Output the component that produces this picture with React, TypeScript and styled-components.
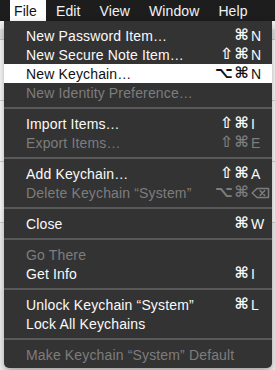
import React from 'react';
import styled, { createGlobalStyle } from 'styled-components';

type Item = {
  label: string;
  mods?: string;
  keyChar?: string;
  deleteKey?: boolean;
  disabled?: boolean;
  active?: boolean;
};

type Entry = Item | 'sep';

const entries: Entry[] = [
  { label: 'New Password Item…', mods: '⌘', keyChar: 'N' },
  { label: 'New Secure Note Item…', mods: '⇧⌘', keyChar: 'N' },
  { label: 'New Keychain…', mods: '⌥⌘', keyChar: 'N', active: true },
  { label: 'New Identity Preference…', disabled: true },
  'sep',
  { label: 'Import Items…', mods: '⇧⌘', keyChar: 'I' },
  { label: 'Export Items…', mods: '⇧⌘', keyChar: 'E', disabled: true },
  'sep',
  { label: 'Add Keychain…', mods: '⇧⌘', keyChar: 'A' },
  {
    label: 'Delete Keychain “System”',
    mods: '⌥⌘',
    deleteKey: true,
    disabled: true,
  },
  'sep',
  { label: 'Close', mods: '⌘', keyChar: 'W' },
  'sep',
  { label: 'Go There', disabled: true },
  { label: 'Get Info', mods: '⌘', keyChar: 'I' },
  'sep',
  { label: 'Unlock Keychain “System”', mods: '⌘', keyChar: 'L' },
  { label: 'Lock All Keychains' },
  'sep',
  { label: 'Make Keychain “System” Default', disabled: true },
];

const menuTitles = ['File', 'Edit', 'View', 'Window', 'Help'];

function DeleteGlyph({ color }: { color: string }) {
  return (
    <svg width="19" height="12" viewBox="0 0 19 12" fill="none">
      <path
        d="M6 1.5 H17.5 V10.5 H6 L1.2 6 Z"
        stroke={color}
        strokeWidth="1.5"
        strokeLinejoin="round"
      />
      <path
        d="M9.2 3.7 L13.6 8.3 M13.6 3.7 L9.2 8.3"
        stroke={color}
        strokeWidth="1.6"
        strokeLinecap="round"
      />
    </svg>
  );
}

export default function App() {
  return (
    <>
      <GlobalStyle />
      <Screen>
        <MenuBar>
          {menuTitles.map((t, i) => (
            <BarItem key={t} $active={i === 0}>
              {t}
            </BarItem>
          ))}
        </MenuBar>
        <Backdrop>
          <BackdropHeader />
          <BackdropRow />
          <BackdropRow />
          <BackdropRow />
        </Backdrop>
        <Menu>
          {entries.map((e, i) =>
            e === 'sep' ? (
              <Separator key={i} />
            ) : (
              <Row key={i} $active={!!e.active} $disabled={!!e.disabled}>
                <Label>{e.label}</Label>
                <Mods>{e.mods}</Mods>
                <KeyChar>
                  {e.deleteKey ? (
                    <DeleteGlyph color={e.disabled ? '#7d7d7d' : '#fff'} />
                  ) : (
                    e.keyChar
                  )}
                </KeyChar>
              </Row>
            )
          )}
        </Menu>
      </Screen>
    </>
  );
}

const GlobalStyle = createGlobalStyle`
  html, body {
    margin: 0;
    padding: 0;
    background: #ececec;
  }
  body {
    font-family: "Liberation Sans", "DejaVu Sans", sans-serif;
    -webkit-font-smoothing: antialiased;
  }
`;

const Screen = styled.div`
  position: relative;
  width: 275px;
  height: 370px;
  overflow: hidden;
  background: #f4f4f4;
`;

const MenuBar = styled.div`
  display: flex;
  align-items: stretch;
  gap: 6px;
  height: 21px;
  padding-left: 10px;
  background: #1d1d1d;
`;

const BarItem = styled.div<{ $active: boolean }>`
  display: flex;
  align-items: center;
  padding: 0 9px 0 4px;
  font-size: 14px;
  letter-spacing: 0.1px;
  color: ${(p) => (p.$active ? '#111' : '#f2f2f2')};
  background: ${(p) => (p.$active ? '#fff' : 'transparent')};
`;

const Backdrop = styled.div`
  display: flex;
  flex-direction: column;
  padding-top: 8px;
`;

const BackdropHeader = styled.div`
  height: 10px;
  border-bottom: 1px solid #c9c9c9;
  background: #e4e4e4;
`;

const BackdropRow = styled.div`
  height: 60px;
  border-bottom: 1px solid #d4d4d4;
  background: #fff;
`;

const Menu = styled.div`
  position: absolute;
  top: 21px;
  left: 4px;
  width: 268px;
  padding: 5px 0 4px;
  box-sizing: border-box;
  background: #333333;
  border-radius: 0 0 5px 5px;
  box-shadow: 0 4px 10px rgba(0, 0, 0, 0.35);
`;

const Row = styled.div<{ $active: boolean; $disabled: boolean }>`
  display: flex;
  align-items: center;
  height: 19px;
  padding-left: 22px;
  font-size: 14px;
  letter-spacing: 0.15px;
  color: ${(p) => (p.$active ? '#111' : p.$disabled ? '#7d7d7d' : '#fafafa')};
  background: ${(p) => (p.$active ? '#fff' : 'transparent')};
`;

const Label = styled.span`
  flex: 1;
  white-space: nowrap;
`;

const Mods = styled.span`
  font-family: "DejaVu Sans", sans-serif;
  font-size: 15.5px;
  font-weight: bold;
  line-height: 19px;
  letter-spacing: 2px;
  text-align: right;
`;

const KeyChar = styled.span`
  display: flex;
  align-items: center;
  width: 21px;
  box-sizing: border-box;
`;

const Separator = styled.div`
  height: 2px;
  margin: 5px 0;
  background: #595959;
`;
